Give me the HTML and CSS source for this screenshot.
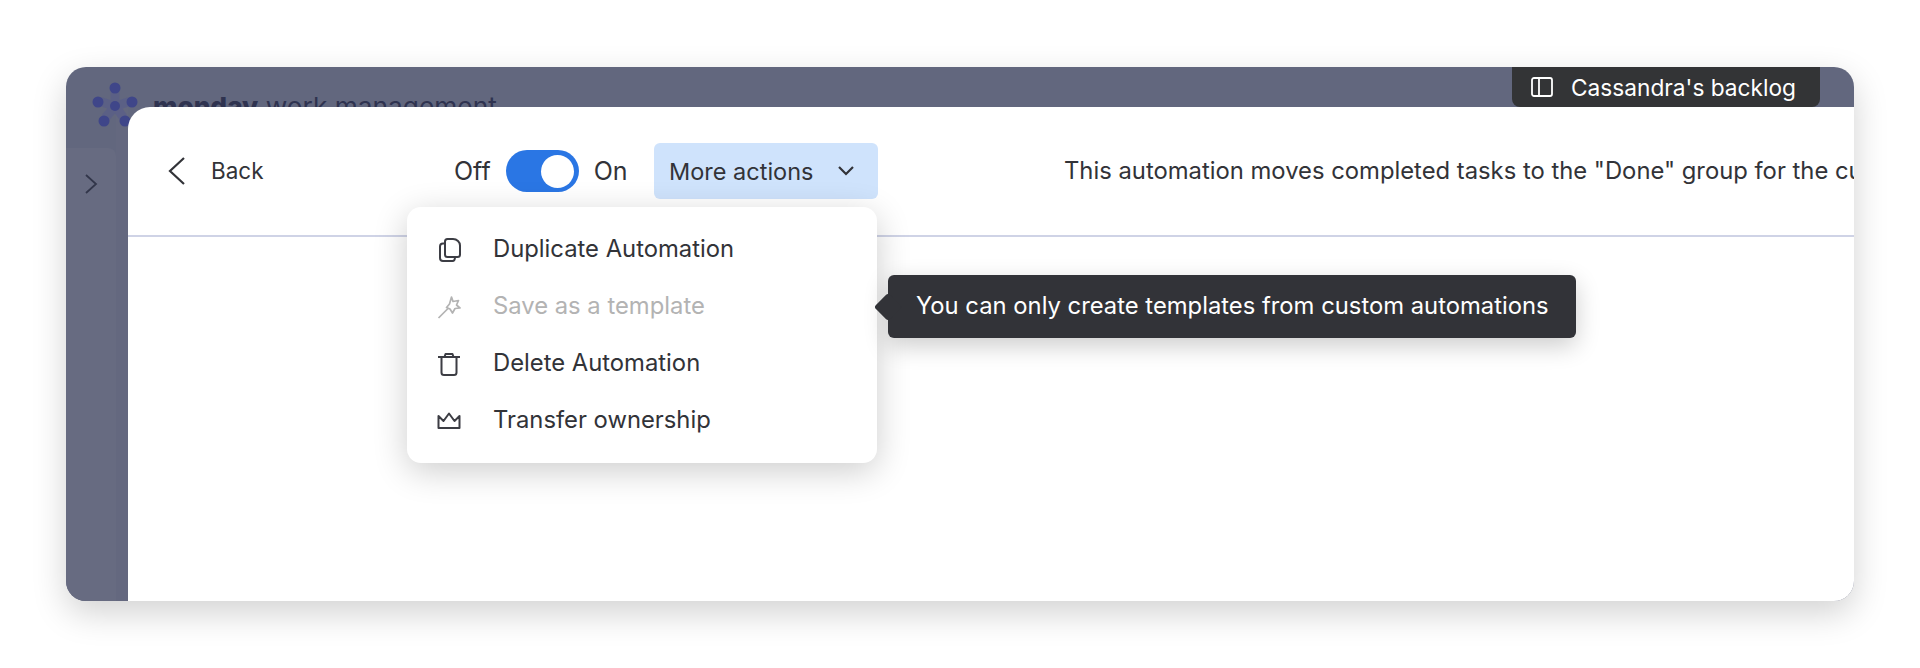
FILE: index.html
```html
<!DOCTYPE html>
<html lang="en">
<head>
  <meta charset="UTF-8">
  <title>Automation - More actions</title>
  <link rel="stylesheet" href="styles.css">
</head>
<body>
  <div class="window">
    <div class="brand">
      <svg class="brand-logo" width="62" height="62" viewBox="0 0 62 62">
        <g stroke="#565b8c" stroke-width="9" stroke-linecap="round" opacity="0.55">
          <path d="M31 22V12M27 24L18 21M35 24L44 21M28 29L22 36M34 29L39 36"/>
        </g>
        <g fill="#3f4689">
          <circle cx="31" cy="7" r="5.5"/>
          <circle cx="14" cy="21" r="5.5"/>
          <circle cx="48" cy="21" r="5.5"/>
          <circle cx="20" cy="40" r="5.5"/>
          <circle cx="41" cy="40" r="5.5"/>
          <circle cx="31" cy="25" r="5"/>
        </g>
      </svg>
      <span class="brand-name"><b>monday</b> work management</span>
    </div>

    <div class="topbar">
      <div class="backlog">
        <svg width="22" height="20" viewBox="0 0 22 20" fill="none" stroke="#fff" stroke-width="1.8">
          <rect x="1" y="1" width="20" height="18" rx="2"/>
          <path d="M8 1V19"/>
        </svg>
        <span>Cassandra's backlog</span>
      </div>
    </div>

    <div class="main">
      <aside class="sidebar">
        <div class="sidebar-rail">
          <svg class="sidebar-arrow" width="14" height="22" viewBox="0 0 14 22" fill="none" stroke="#32364a" stroke-width="1.8">
            <path d="M2 2L12 11L2 20"/>
          </svg>
        </div>
        <div class="sidebar-edge"></div>
      </aside>

      <section class="panel">
        <header class="panel-head">
          <a class="back">
            <svg width="18" height="28" viewBox="0 0 18 28" fill="none" stroke="#323338" stroke-width="2.2">
              <path d="M16 1L2 14L16 27"/>
            </svg>
            <span>Back</span>
          </a>
          <div class="switch-group">
            <span>Off</span>
            <div class="switch"><div class="knob"></div></div>
            <span>On</span>
          </div>
          <div class="more-wrap">
            <button class="more-btn">
              <span>More actions</span>
              <svg width="18" height="12" viewBox="0 0 18 12" fill="none" stroke="#323338" stroke-width="2.2">
                <path d="M2 2L9 9L16 2"/>
              </svg>
            </button>

            <div class="menu">
              <div class="menu-item">
                <svg width="24" height="24" viewBox="0 0 24 24" fill="none" stroke="#3c3d44" stroke-width="2" stroke-linejoin="round">
                  <path d="M8 3.500C8 2 9 1 10.500 1H16C20 1 23 4 23 7.500V16.500C23 18 22 19 20.500 19H10.500C9 19 8 18 8 16.500Z"/>
                  <path d="M8 5.500H6C4 5.500 3 6.500 3 8.500V20C3 22 4 23 6 23H15.500C17 23 18 22 18 19"/>
                </svg>
                <span>Duplicate Automation</span>
              </div>
              <div class="menu-item disabled">
                <svg width="24" height="24" viewBox="0 0 24 24" fill="none" stroke="#b3b3b3" stroke-width="1.7" stroke-linejoin="round">
                  <path d="M14.500 2L16 6.500L21.500 5.500L19.500 10L23 13L18 13.500L15.500 18L13 14L9.500 12.500L12.500 9Z"/>
                  <path d="M11 13.500L1.500 23"/>
                </svg>
                <span>Save as a template</span>
              </div>
              <div class="menu-item">
                <svg width="24" height="24" viewBox="0 0 24 24" fill="none" stroke="#3c3d44" stroke-width="2" stroke-linejoin="round">
                  <path d="M1 5H23"/>
                  <path d="M7.500 5L8.500 2H15.500L16.500 5"/>
                  <path d="M4.500 5V20.500C4.500 22 5.500 23 7 23H17C18.500 23 19.500 22 19.500 20.500V5"/>
                </svg>
                <span>Delete Automation</span>
              </div>
              <div class="menu-item">
                <svg width="24" height="24" viewBox="0 0 24 24" fill="none" stroke="#3c3d44" stroke-width="2" stroke-linejoin="round">
                  <path d="M1.500 7L6.500 12L12 4.500L17.500 12L22.500 7V19H1.500Z"/>
                </svg>
                <span>Transfer ownership</span>
              </div>
            </div>

            <div class="tooltip"><span>You can only create templates from custom automations</span></div>
          </div>
          <p class="description">This automation moves completed tasks to the "Done" group for the current sprint</p>
        </header>
      </section>
    </div>
  </div>
</body>
</html>
```

FILE: styles.css
```css
* {
  box-sizing: border-box;
}
body {
  margin: 0;
  height: 668px;
  background-color: #fff;
  font-family: "Inter", sans-serif;
  color: #323338;
  padding: 67px 66px;
  overflow: hidden;
}
.window {
  position: relative;
  width: 1788px;
  height: 534px;
  background-color: #62677e;
  border-radius: 20px;
  display: flex;
  flex-direction: column;
  box-shadow: 0 12px 34px rgba(0, 0, 0, 0.18);
}

.brand {
  position: absolute;
  top: 14px;
  left: 18px;
  display: flex;
  align-items: flex-start;
  gap: 7px;
}
.brand-name {
  margin-top: 10px;
  font-size: 26.300px;
  color: #2f3350;
  white-space: nowrap;
}
.brand-name b {
  font-weight: 800;
}

.topbar {
  position: relative;
  height: 40px;
  flex-shrink: 0;
  display: flex;
  justify-content: flex-end;
  padding-right: 34px;
}
.backlog {
  display: flex;
  align-items: center;
  gap: 18px;
  width: 308px;
  padding-left: 19px;
  background-color: #333436;
  border-radius: 0 0 8px 8px;
  color: #fff;
  font-size: 22.700px;
}

.main {
  flex: 1;
  display: flex;
  min-height: 0;
}
.sidebar {
  width: 62px;
  flex-shrink: 0;
  display: flex;
  overflow: hidden;
  border-bottom-left-radius: 20px;
}
.sidebar-rail {
  flex: 1;
  margin-top: 41px;
  padding: 25px 0 0 18px;
  background-color: #676b81;
  border-top-right-radius: 8px;
}
.sidebar-arrow {
  display: block;
}
.sidebar-edge {
  width: 12px;
  background-color: #64687f;
}

.panel {
  position: relative;
  flex: 1;
  min-width: 0;
  background-color: #fff;
  border-radius: 22px 0 20px 0;
}
.panel-head {
  height: 130px;
  display: flex;
  align-items: center;
  padding-left: 40px;
  border-bottom: 2px solid #cfd3e6;
  font-size: 23.500px;
}
.back {
  display: flex;
  align-items: center;
  gap: 25px;
  width: 285px;
  flex-shrink: 0;
  font-size: 22.500px;
}
.back span {
  margin-bottom: 1px;
}
.switch-group {
  display: flex;
  align-items: center;
  gap: 15px;
  width: 201px;
  padding-left: 1px;
  flex-shrink: 0;
  font-size: 25px;
}
.switch {
  width: 73px;
  height: 42px;
  border-radius: 21px;
  background-color: #2a76e4;
  display: flex;
  align-items: center;
  justify-content: flex-end;
  padding-right: 5px;
}
.knob {
  width: 33px;
  height: 33px;
  border-radius: 50%;
  background-color: #fff;
}
.more-wrap {
  position: relative;
  flex-shrink: 0;
}
.more-btn {
  width: 224px;
  height: 56px;
  display: flex;
  align-items: center;
  justify-content: space-between;
  padding: 0 23px 0 15px;
  border: 0;
  border-radius: 6px;
  background-color: #cfe3fc;
  color: #323338;
  font-family: inherit;
  font-size: 23.500px;
}
.description {
  margin: 0 0 2px 186px;
  white-space: nowrap;
  overflow: hidden;
  flex: 1;
  min-width: 0;
  font-size: 23.800px;
}

.menu {
  position: absolute;
  top: 64px;
  left: -247px;
  width: 470px;
  padding: 14px 0 14px;
  background-color: #fff;
  border-radius: 14px;
  box-shadow: 0 8px 34px rgba(0, 0, 0, 0.2);
  z-index: 2;
  font-size: 23.800px;
}
.menu-item {
  height: 57px;
  display: flex;
  align-items: center;
  gap: 32px;
  padding-left: 30px;
  white-space: nowrap;
}
.menu-item span {
  margin-bottom: 2px;
}
.menu-item svg {
  flex-shrink: 0;
}
.menu-item.disabled {
  color: #b3b3b3;
}

.tooltip {
  position: absolute;
  top: 132px;
  left: 234px;
  width: 688px;
  height: 63px;
  display: flex;
  align-items: center;
  padding-left: 28px;
  background-color: #323338;
  border-radius: 6px;
  color: #fff;
  font-size: 23.800px;
  white-space: nowrap;
  box-shadow: 0 8px 24px rgba(0, 0, 0, 0.2);
  z-index: 3;
}
.tooltip span {
  margin-bottom: 2px;
}
.tooltip::before {
  content: "";
  position: absolute;
  left: -10px;
  top: 22px;
  width: 20px;
  height: 20px;
  background-color: #323338;
  border-radius: 3px;
  transform: rotate(45deg);
}
```
